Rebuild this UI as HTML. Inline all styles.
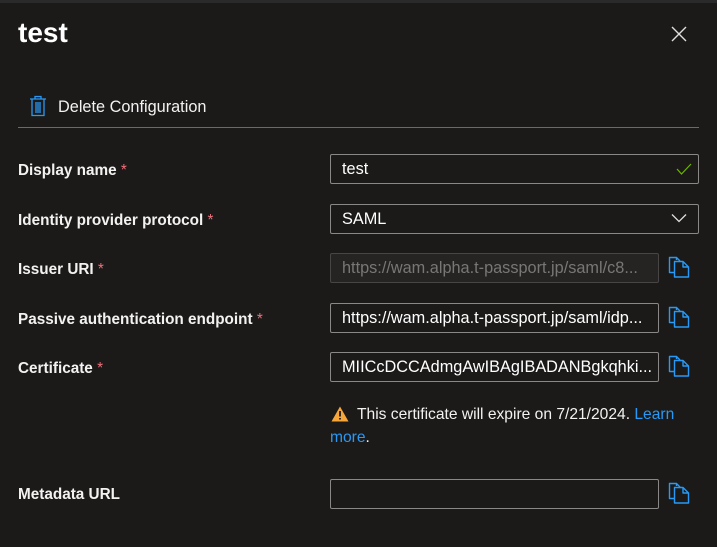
<!DOCTYPE html>
<html><head><style>
body{margin:0;width:717px;height:547px;background:#1b1a19;font-family:"Liberation Sans",sans-serif;color:#fff;position:relative;overflow:hidden}
.top{position:absolute;left:0;top:0;width:717px;height:3px;background:#2a2a2a}
.a{position:absolute;white-space:nowrap}
.lbl{font-size:15.3px;font-weight:bold;color:#f3f2f1}
.lbl span{color:#f1707b;font-weight:normal}
.in{position:absolute;border:1px solid #8a8886;border-radius:2px;box-sizing:border-box;height:30px;font-size:16.3px;line-height:29px;padding-left:11px;color:#fff;white-space:nowrap;overflow:hidden}
.dis{background:#252423;border-color:#484644;color:#797775}
.cp{position:absolute;width:24px;height:22px}
</style></head><body>
<div class="top"></div>
<div class="a" style="left:18px;top:17px;font-size:28px;font-weight:bold">test</div>
<svg class="a" style="left:670px;top:25px" width="18" height="18" viewBox="0 0 18 18"><path d="M2 2L16 16M16 2L2 16" stroke="#e1dfdd" stroke-width="1.4"/></svg>
<svg class="a" style="left:29px;top:95px" width="18" height="22" viewBox="0 0 18 22"><path d="M1 4H17M6 4V1.5H12V4M3 4V20.5H15V4M7 7V18M9 7V18M11 7V18" stroke="#2899f5" stroke-width="1.3" fill="none"/></svg>
<div class="a" style="left:58px;top:98px;font-size:16.3px;color:#f3f2f1">Delete Configuration</div>
<div class="a" style="left:18px;top:127px;width:681px;height:1px;background:#6b6a69"></div>

<div class="a lbl" style="left:18px;top:162px">Display name <span>*</span></div>
<div class="in" style="left:330px;top:154px;width:369px">test</div>
<svg class="a" style="left:676px;top:162px" width="16" height="14" viewBox="0 0 16 14"><path d="M1 7L5.5 12L15 2" stroke="#6bb700" stroke-width="1.2" fill="none"/></svg>

<div class="a lbl" style="left:18px;top:212px">Identity provider protocol <span>*</span></div>
<div class="in" style="left:330px;top:204px;width:369px">SAML</div>
<svg class="a" style="left:671px;top:213px" width="16" height="10" viewBox="0 0 16 10"><path d="M1 1.5L8 8.5L15 1.5" stroke="#e1dfdd" stroke-width="1.3" fill="none"/></svg>

<div class="a lbl" style="left:18px;top:261px">Issuer URI <span>*</span></div>
<div class="in dis" style="left:330px;top:253px;width:329px">https://wam.alpha.t-passport.jp/saml/c8...</div>

<div class="a lbl" style="left:18px;top:311px">Passive authentication endpoint <span>*</span></div>
<div class="in" style="left:330px;top:303px;width:329px">https://wam.alpha.t-passport.jp/saml/idp...</div>

<div class="a lbl" style="left:18px;top:360px">Certificate <span>*</span></div>
<div class="in" style="left:330px;top:352px;width:329px">MIICcDCCAdmgAwIBAgIBADANBgkqhki...</div>

<svg class="a" style="left:331px;top:406px" width="18" height="16" viewBox="0 0 18 16"><path d="M9 0.5L17.5 15.5H0.5Z" fill="#f7a63a"/><path d="M9 5V10.5M9 12V13.5" stroke="#1b1a19" stroke-width="1.8"/></svg>
<div class="a" style="left:357px;top:406px;font-size:15.6px;color:#f3f2f1">This certificate will expire on 7/21/2024. <span style="color:#2899f5">Learn</span></div>
<div class="a" style="left:330px;top:429px;font-size:15.6px;color:#f3f2f1"><span style="color:#2899f5">more</span>.</div>

<div class="a lbl" style="left:18px;top:486px">Metadata URL</div>
<div class="in" style="left:330px;top:479px;width:329px"></div>

<svg style="display:none"><symbol id="c" viewBox="0 0 24 22"><path d="M8.5 4V1.5H1.5V16.5H6M8.5 1.5L12 5" stroke="#2899f5" stroke-width="1.4" fill="none" stroke-linejoin="round"/><path d="M6.5 5.5H15L20.5 11V21H6.5ZM15 5.5V11H20.5" stroke="#2899f5" stroke-width="1.4" fill="none" stroke-linejoin="round"/></symbol></svg>
<svg class="cp" style="left:668px;top:256px"><use href="#c"/></svg>
<svg class="cp" style="left:668px;top:306px"><use href="#c"/></svg>
<svg class="cp" style="left:668px;top:355px"><use href="#c"/></svg>
<svg class="cp" style="left:668px;top:482px"><use href="#c"/></svg>
</body></html>
